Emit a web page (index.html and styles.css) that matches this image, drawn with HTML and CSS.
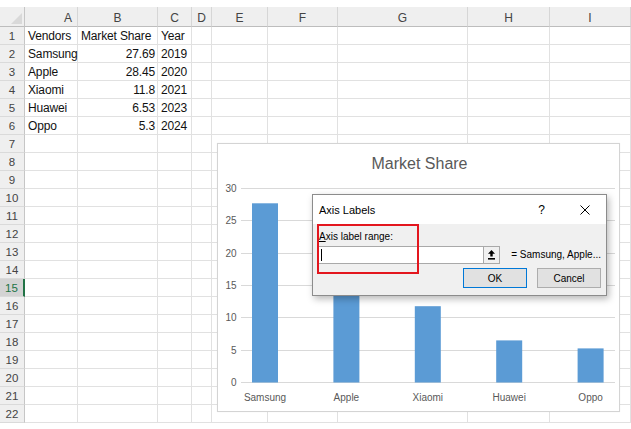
FILE: index.html
```html
<!DOCTYPE html>
<html>
<head>
<meta charset="utf-8">
<link rel="stylesheet" href="styles.css">
</head>
<body>
<div class="sheet">
  <div class="row hdr"><span class="corner"></span><span class="ha">A</span><span>B</span><span>C</span><span>D</span><span>E</span><span>F</span><span>G</span><span>H</span><span>I</span></div>
  <div class="row"><span class="rh">1</span><span>Vendors</span><span>Market Share</span><span>Year</span><span></span><span></span><span></span><span></span><span></span><span></span></div>
  <div class="row"><span class="rh">2</span><span>Samsung</span><span class="num">27.69</span><span>2019</span><span></span><span></span><span></span><span></span><span></span><span></span></div>
  <div class="row"><span class="rh">3</span><span>Apple</span><span class="num">28.45</span><span>2020</span><span></span><span></span><span></span><span></span><span></span><span></span></div>
  <div class="row"><span class="rh">4</span><span>Xiaomi</span><span class="num">11.8</span><span>2021</span><span></span><span></span><span></span><span></span><span></span><span></span></div>
  <div class="row"><span class="rh">5</span><span>Huawei</span><span class="num">6.53</span><span>2023</span><span></span><span></span><span></span><span></span><span></span><span></span></div>
  <div class="row"><span class="rh">6</span><span>Oppo</span><span class="num">5.3</span><span>2024</span><span></span><span></span><span></span><span></span><span></span><span></span></div>
  <div class="row"><span class="rh">7</span><span></span><span></span><span></span><span></span><span></span><span></span><span></span><span></span><span></span></div>
  <div class="row"><span class="rh">8</span><span></span><span></span><span></span><span></span><span></span><span></span><span></span><span></span><span></span></div>
  <div class="row"><span class="rh">9</span><span></span><span></span><span></span><span></span><span></span><span></span><span></span><span></span><span></span></div>
  <div class="row"><span class="rh">10</span><span></span><span></span><span></span><span></span><span></span><span></span><span></span><span></span><span></span></div>
  <div class="row"><span class="rh">11</span><span></span><span></span><span></span><span></span><span></span><span></span><span></span><span></span><span></span></div>
  <div class="row"><span class="rh">12</span><span></span><span></span><span></span><span></span><span></span><span></span><span></span><span></span><span></span></div>
  <div class="row"><span class="rh">13</span><span></span><span></span><span></span><span></span><span></span><span></span><span></span><span></span><span></span></div>
  <div class="row"><span class="rh">14</span><span></span><span></span><span></span><span></span><span></span><span></span><span></span><span></span><span></span></div>
  <div class="row"><span class="rh sel">15</span><span></span><span></span><span></span><span></span><span></span><span></span><span></span><span></span><span></span></div>
  <div class="row"><span class="rh">16</span><span></span><span></span><span></span><span></span><span></span><span></span><span></span><span></span><span></span></div>
  <div class="row"><span class="rh">17</span><span></span><span></span><span></span><span></span><span></span><span></span><span></span><span></span><span></span></div>
  <div class="row"><span class="rh">18</span><span></span><span></span><span></span><span></span><span></span><span></span><span></span><span></span><span></span></div>
  <div class="row"><span class="rh">19</span><span></span><span></span><span></span><span></span><span></span><span></span><span></span><span></span><span></span></div>
  <div class="row"><span class="rh">20</span><span></span><span></span><span></span><span></span><span></span><span></span><span></span><span></span><span></span></div>
  <div class="row"><span class="rh">21</span><span></span><span></span><span></span><span></span><span></span><span></span><span></span><span></span><span></span></div>
  <div class="row"><span class="rh">22</span><span></span><span></span><span></span><span></span><span></span><span></span><span></span><span></span><span></span></div>
</div>

<div class="chart">
  <svg class="plot" width="401" height="267" viewBox="0 0 401 267">
    <text class="title" x="201.5" y="25.3" text-anchor="middle">Market Share</text>
    <g class="grid">
      <line x1="23" x2="397" y1="44.5" y2="44.5"/>
      <line x1="23" x2="397" y1="76.5" y2="76.5"/>
      <line x1="23" x2="397" y1="109.5" y2="109.5"/>
      <line x1="23" x2="397" y1="141.5" y2="141.5"/>
      <line x1="23" x2="397" y1="173.5" y2="173.5"/>
      <line x1="23" x2="397" y1="206.5" y2="206.5"/>
      <line x1="23" x2="397" y1="238.5" y2="238.5"/>
    </g>
    <g class="bars">
      <rect x="34" y="59.3" width="26" height="179.2"/>
      <rect x="115.4" y="54.3" width="26" height="184.2"/>
      <rect x="196.8" y="162.2" width="26" height="76.3"/>
      <rect x="278.2" y="196.4" width="26" height="42.1"/>
      <rect x="359.6" y="204.4" width="26" height="34.1"/>
    </g>
    <g class="yax" text-anchor="end">
      <text x="18.5" y="242.2">0</text>
      <text x="18.5" y="209.8">5</text>
      <text x="18.5" y="177.4">10</text>
      <text x="18.5" y="145">15</text>
      <text x="18.5" y="112.6">20</text>
      <text x="18.5" y="80.2">25</text>
      <text x="18.5" y="47.8">30</text>
    </g>
    <g class="xax" text-anchor="middle">
      <text x="47" y="256.7">Samsung</text>
      <text x="128.4" y="256.7">Apple</text>
      <text x="209.8" y="256.7">Xiaomi</text>
      <text x="291.2" y="256.7">Huawei</text>
      <text x="372.6" y="256.7">Oppo</text>
    </g>
  </svg>
</div>

<div class="dialog">
  <div class="dtitle">
    <span class="dname">Axis Labels</span>
    <span class="dhelp">?</span>
    <span class="dclose"><svg width="10" height="10" viewBox="0 0 10 10"><path d="M0.5 0.5 L9.5 9.5 M9.5 0.5 L0.5 9.5" stroke="#000" stroke-width="1" fill="none"/></svg></span>
  </div>
  <div class="dbody">
    <div class="dlabel"><u>A</u>xis label range:</div>
    <div class="inrow">
      <div class="input"><span class="caret"></span></div>
      <div class="collapse"><svg width="7" height="10" viewBox="0 0 7 10"><path d="M3.5 0 L7 3.8 L4.7 3.8 L4.7 6.6 L2.3 6.6 L2.3 3.8 L0 3.8 Z" fill="#000"/><rect x="0" y="8" width="7" height="1.6" fill="#000"/></svg></div>
      <span class="eqtext">= Samsung, Apple...</span>
    </div>
    <div class="btnrow">
      <div class="btn def">OK</div>
      <div class="btn">Cancel</div>
    </div>
  </div>
</div>
<div class="hl"></div>
</body>
</html>
```

FILE: styles.css
```css
html, body {
  margin: 0;
  padding: 0;
}
body {
  width: 631px;
  height: 429px;
  overflow: hidden;
  position: relative;
  background: #fff;
  font-family: "Liberation Sans", Arial, sans-serif;
}
.sheet {
  padding-top: 7px;
}
.row {
  display: grid;
  grid-template-columns: 25px 53px 80px 34px 20px 56px 70px 130px 82px 81px;
  height: 18px;
}
.row > span {
  box-sizing: border-box;
  border-right: 1px solid #e1e1e1;
  border-bottom: 1px solid #e1e1e1;
  padding: 2px 3px 0 3px;
  line-height: 15px;
  font-size: 12px;
  letter-spacing: -0.15px;
  white-space: nowrap;
  overflow: visible;
  color: #111;
}
.row > .num {
  text-align: right;
  padding-right: 2px;
}
.row > .rh {
  background: #efefef;
  color: #444;
  text-align: center;
  border-right-color: #c6c6c6;
  border-bottom-color: #dadada;
  font-size: 11.5px;
  letter-spacing: 0;
  padding: 2px 0 0 0;
}
.row > .rh.sel {
  background: #d3d3d3;
  color: #217346;
  border-right: 2px solid #217346;
}
.row.hdr {
  height: 20px;
  background: #efefef;
}
.row.hdr > span {
  border-bottom: 1px solid #bdbdbd;
  border-right-color: #d6d6d6;
  text-align: center;
  color: #444;
  letter-spacing: 0;
  padding: 3px 0 0 0;
  line-height: 16px;
}
.row.hdr > .ha {
  text-align: right;
  padding-right: 5px;
}
.row.hdr > .corner {
  position: relative;
  border-right-color: #c6c6c6;
}
.corner::after {
  content: "";
  position: absolute;
  right: 2px;
  bottom: 2px;
  width: 0;
  height: 0;
  border-left: 11px solid transparent;
  border-bottom: 11px solid #d9d9d9;
}

/* chart */
.chart {
  position: absolute;
  left: 217px;
  top: 143px;
  width: 403px;
  height: 269px;
  box-sizing: border-box;
  border: 1px solid #d4d4d4;
  background: #fff;
  box-shadow: 0 0 1px rgba(0, 0, 0, 0.08);
}
.plot {
  display: block;
}
.plot text {
  font-family: "Liberation Sans", Arial, sans-serif;
  font-size: 10px;
  fill: #595959;
}
.plot .title {
  font-size: 16px;
}
.grid line {
  stroke: #d9d9d9;
  stroke-width: 1;
}
.bars rect {
  fill: #5b9bd5;
}

/* dialog */
.dialog {
  position: absolute;
  left: 312px;
  top: 194px;
  width: 295px;
  height: 102px;
  box-sizing: border-box;
  border: 1px solid #8c8c8c;
  background: #f0f0f0;
  box-shadow: 2px 3px 7px rgba(0, 0, 0, 0.28);
  display: flex;
  flex-direction: column;
  color: #000;
}
.dtitle {
  height: 29px;
  background: #fff;
  display: flex;
  align-items: center;
  padding-left: 6px;
  font-size: 11px;
  line-height: 13px;
}
.dname {
  flex: 1;
  padding-top: 2px;
}
.dhelp {
  width: 43px;
  text-align: center;
  font-size: 12px;
  padding-top: 1px;
}
.dclose {
  width: 43px;
  display: flex;
  justify-content: center;
  align-items: center;
}
.dclose svg {
  display: block;
}
.dbody {
  padding: 7px 5px 0 5px;
  font-size: 10px;
}
.dlabel {
  line-height: 12px;
  padding-left: 1px;
}
.inrow {
  display: flex;
  align-items: center;
  margin-top: 3px;
  height: 18px;
}
.input {
  width: 169px;
  height: 18px;
  box-sizing: border-box;
  background: #fff;
  border: 1px solid #a9a9a9;
  display: flex;
  align-items: center;
  padding-left: 2px;
}
.caret {
  display: block;
  width: 1px;
  height: 12px;
  background: #000;
}
.collapse {
  width: 17px;
  height: 18px;
  box-sizing: border-box;
  border: 1px solid #a9a9a9;
  border-left: none;
  background: #f0f0f0;
  display: flex;
  align-items: center;
  justify-content: center;
}
.collapse svg {
  display: block;
}
.eqtext {
  margin-left: 11px;
  white-space: nowrap;
  line-height: 12px;
}
.btnrow {
  display: flex;
  justify-content: flex-end;
  gap: 10px;
  margin-top: 4px;
}
.btn {
  width: 64px;
  height: 20px;
  box-sizing: border-box;
  border: 1px solid #adadad;
  background: #e1e1e1;
  font-size: 10px;
  display: flex;
  align-items: center;
  justify-content: center;
}
.btn.def {
  border-color: #0078d7;
}
.hl {
  position: absolute;
  left: 317px;
  top: 224px;
  width: 102px;
  height: 50px;
  box-sizing: border-box;
  border: 2px solid #e3161e;
}
```
